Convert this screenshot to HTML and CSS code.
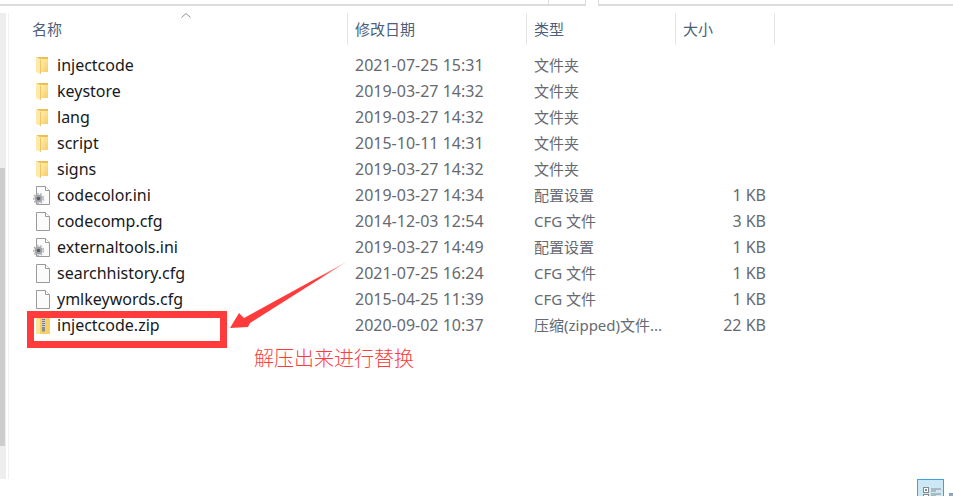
FILE: index.html
```html
<!DOCTYPE html>
<html lang="zh">
<head>
<meta charset="utf-8">
<title>injectcode</title>
<link rel="stylesheet" href="styles.css">
</head>
<body>
<svg class="defs" width="0" height="0" aria-hidden="true">
  <defs>
    <linearGradient id="fg" x1="0" y1="0" x2="1" y2="1"><stop offset="0" stop-color="#fff0b0"/><stop offset="1" stop-color="#f6cd66"/></linearGradient>
    <symbol id="folder" viewBox="0 0 18 20">
      <path d="M3 2 H15 V17 H8 V5 Z" fill="#eebf4f"/>
      <path d="M7.500 4 H15 V17 H7.500 Z" fill="url(#fg)"/>
      <path d="M3 2.500 L7.500 5 V19 L3 17 Z" fill="#fdeaa8"/>
      <path d="M7.500 5 V19" stroke="#e9bd55" stroke-width=".8"/>
    </symbol>
    <symbol id="doc" viewBox="0 0 18 20">
      <path d="M3.500 1.500 H12.500 L16.500 5.500 V19.500 H3.500 Z" fill="#fbfbfb" stroke="#9a9a9a"/>
      <path d="M12.500 1.500 V5.500 H16.500" fill="#fff" stroke="#9a9a9a"/>
    </symbol>
    <symbol id="cfg" viewBox="0 0 18 20">
      <path d="M3.500 1.500 H12.500 L16.500 5.500 V19.500 H3.500 Z" fill="#fbfbfb" stroke="#9a9a9a"/>
      <path d="M12.500 1.500 V5.500 H16.500" fill="#fff" stroke="#9a9a9a"/>
      <circle cx="5.500" cy="13.500" r="4" fill="#a2a6aa"/>
      <circle cx="5.500" cy="13.500" r="5" fill="none" stroke="#b4b8bc" stroke-width="1.500" stroke-dasharray="2 1.500"/>
      <circle cx="5.500" cy="13.500" r="1.800" fill="#5a5e62"/>
    </symbol>
    <symbol id="zip" viewBox="0 0 18 20">
      <path d="M3 3 H17 V19 H3 Z" fill="#f5cf68"/>
      <path d="M3 3 L7 4 V19 H3 Z" fill="#fbe6a0"/>
      <rect x="8" y="3" width="5" height="13" fill="#cfcfcf"/>
      <path d="M9 4.500 H12 M9 6.500 H12 M9 8.500 H12 M9 10.500 H12" stroke="#7d7d7d"/>
      <rect x="9" y="12" width="3" height="4.500" fill="#8c8c8c"/>
    </symbol>
  </defs>
</svg>
<div class="window">
  <div class="topbar">
    <div class="top-main"></div>
    <div class="top-button"></div>
    <div class="top-gap"></div>
    <div class="top-search"></div>
  </div>
  <div class="content">
    <div class="scrollbar"><div class="scroll-thumb"></div></div>
    <div class="pane">
      <div class="header">
        <div class="col col-name">名称<svg class="sort" width="10" height="5" viewBox="0 0 10 5"><path d="M.5 4.500 L5 .5 L9.500 4.500" fill="none" stroke="#8d9299"/></svg></div>
        <div class="col col-date">修改日期</div>
        <div class="col col-type">类型</div>
        <div class="col col-size">大小</div>
      </div>
      <div class="rows">
        <div class="row"><span class="name"><svg class="icon"><use href="#folder"/></svg>injectcode</span><span class="date">2021-07-25 15:31</span><span class="type">文件夹</span><span class="size"></span></div>
        <div class="row"><span class="name"><svg class="icon"><use href="#folder"/></svg>keystore</span><span class="date">2019-03-27 14:32</span><span class="type">文件夹</span><span class="size"></span></div>
        <div class="row"><span class="name"><svg class="icon"><use href="#folder"/></svg>lang</span><span class="date">2019-03-27 14:32</span><span class="type">文件夹</span><span class="size"></span></div>
        <div class="row"><span class="name"><svg class="icon"><use href="#folder"/></svg>script</span><span class="date">2015-10-11 14:31</span><span class="type">文件夹</span><span class="size"></span></div>
        <div class="row"><span class="name"><svg class="icon"><use href="#folder"/></svg>signs</span><span class="date">2019-03-27 14:32</span><span class="type">文件夹</span><span class="size"></span></div>
        <div class="row"><span class="name"><svg class="icon"><use href="#cfg"/></svg>codecolor.ini</span><span class="date">2019-03-27 14:34</span><span class="type">配置设置</span><span class="size">1 KB</span></div>
        <div class="row"><span class="name"><svg class="icon"><use href="#doc"/></svg>codecomp.cfg</span><span class="date">2014-12-03 12:54</span><span class="type">CFG 文件</span><span class="size">3 KB</span></div>
        <div class="row"><span class="name"><svg class="icon"><use href="#cfg"/></svg>externaltools.ini</span><span class="date">2019-03-27 14:49</span><span class="type">配置设置</span><span class="size">1 KB</span></div>
        <div class="row"><span class="name"><svg class="icon"><use href="#doc"/></svg>searchhistory.cfg</span><span class="date">2021-07-25 16:24</span><span class="type">CFG 文件</span><span class="size">1 KB</span></div>
        <div class="row"><span class="name"><svg class="icon"><use href="#doc"/></svg>ymlkeywords.cfg</span><span class="date">2015-04-25 11:39</span><span class="type">CFG 文件</span><span class="size">1 KB</span></div>
        <div class="row"><span class="name"><svg class="icon"><use href="#zip"/></svg>injectcode.zip</span><span class="date">2020-09-02 10:37</span><span class="type">压缩(zipped)文件...</span><span class="size">22 KB</span></div>
      </div>
    </div>
  </div>
  <div class="statusbar">
    <div class="view-btn active">
      <svg width="20" height="16" viewBox="0 0 20 16"><rect x="1.500" y="1.500" width="5" height="5" fill="#fff" stroke="#888"/><rect x="3" y="3" width="2" height="2" fill="#6f8fb0"/><rect x="1.500" y="8.500" width="5" height="5" fill="#fff" stroke="#888"/><rect x="3" y="10" width="2" height="2" fill="#c98a3a"/><path d="M9 3 H19 M9 5 H14 M9 8 H19 M9 10 H14" stroke="#8a8a8a"/></svg>
    </div>
    <div class="view-btn">
      <svg width="4" height="10" viewBox="0 0 4 10"><rect x=".5" y=".5" width="6" height="9" fill="#7fb0dc" stroke="#999"/></svg>
    </div>
  </div>
</div>
<div class="redbox"></div>
<svg class="arrow" width="120" height="70" viewBox="0 0 120 70"><defs><linearGradient id="ag" x1="0" y1="1" x2="1" y2="0"><stop offset=".75" stop-color="#ff3b3b"/><stop offset="1" stop-color="#ffc4c4"/></linearGradient></defs><polygon points="1,67 10,52 15,57 119,0 21,62 19,66" fill="url(#ag)"/></svg>
<div class="note">解压出来进行替换</div>
</body>
</html>
```
FILE: styles.css
```css
* { box-sizing: border-box; }
html, body { margin: 0; padding: 0; background: #fff; overflow: hidden; }
body {
  width: 953px;
  height: 496px;
  position: relative;
  font-family: "Noto Sans", "Noto Sans CJK SC", sans-serif;
  font-size: 16px;
}
.defs { position: absolute; }
.window { display: flex; flex-direction: column; height: 496px; }

.topbar { display: flex; height: 6px; flex: none; margin-bottom: 7px; }
.top-main { width: 549px; border-bottom: 2px solid #dcdcdc; border-right: 1px solid #dcdcdc; }
.top-button { width: 37px; border-bottom: 2px solid #dcdcdc; border-right: 1px solid #dcdcdc; }
.top-gap { width: 12px; }
.top-search { flex: 1; border-bottom: 2px solid #dcdcdc; border-left: 1px solid #dcdcdc; }

.content { display: flex; height: 466px; flex: none; }
.scrollbar { width: 6px; background: #eeeeee; padding-top: 155px; padding-bottom: 33px; flex: none; }
.scroll-thumb { width: 5px; height: 100%; background: #cdcdcd; }
.pane { margin-left: 2px; border-left: 1px solid #f1f1f1; flex: 1; }

.header { display: flex; height: 32px; color: #4c607a; }
.col { display: flex; align-items: center; position: relative; padding-left: 7px; padding-bottom: 2px; border-right: 1px solid #e5e5e5; font-size: 15px; }
.col-name { width: 339px; padding-left: 23px; }
.col-date { width: 179px; }
.col-type { width: 149px; }
.col-size { width: 99px; }
.sort { position: absolute; left: 172px; top: 0; }

.rows { padding-top: 7px; }
.row { display: flex; height: 26px; align-items: center; line-height: 26px; white-space: nowrap; }
.name { display: flex; align-items: center; width: 339px; padding-left: 24px; color: #17191c; }
.icon { width: 18px; height: 20px; margin-right: 6px; flex: none; }
.date { width: 179px; padding-left: 7px; color: #666a70; }
.type { width: 140px; padding-left: 7px; color: #666a70; font-size: 15px; }
.size { width: 99px; text-align: right; color: #666a70; }

.statusbar { display: flex; justify-content: flex-end; height: 17px; flex: none; gap: 5px; }
.view-btn { height: 17px; overflow: hidden; }
.view-btn.active { width: 27px; background: #cce8f7; border: 1px solid #3ba5db; border-bottom: 0; padding: 5px 0 0 4px; }
.view-btn:not(.active) { width: 4px; padding-top: 7px; }

.redbox { position: absolute; left: 27px; top: 311px; width: 200px; height: 37px; border: 7px solid #ff3b3b; }
.arrow { position: absolute; left: 229px; top: 261px; }
.note { position: absolute; left: 254px; top: 344px; font-family: "Noto Sans CJK SC", sans-serif; font-size: 20px; font-weight: 300; line-height: 28px; color: #ff3b3b; }
```
